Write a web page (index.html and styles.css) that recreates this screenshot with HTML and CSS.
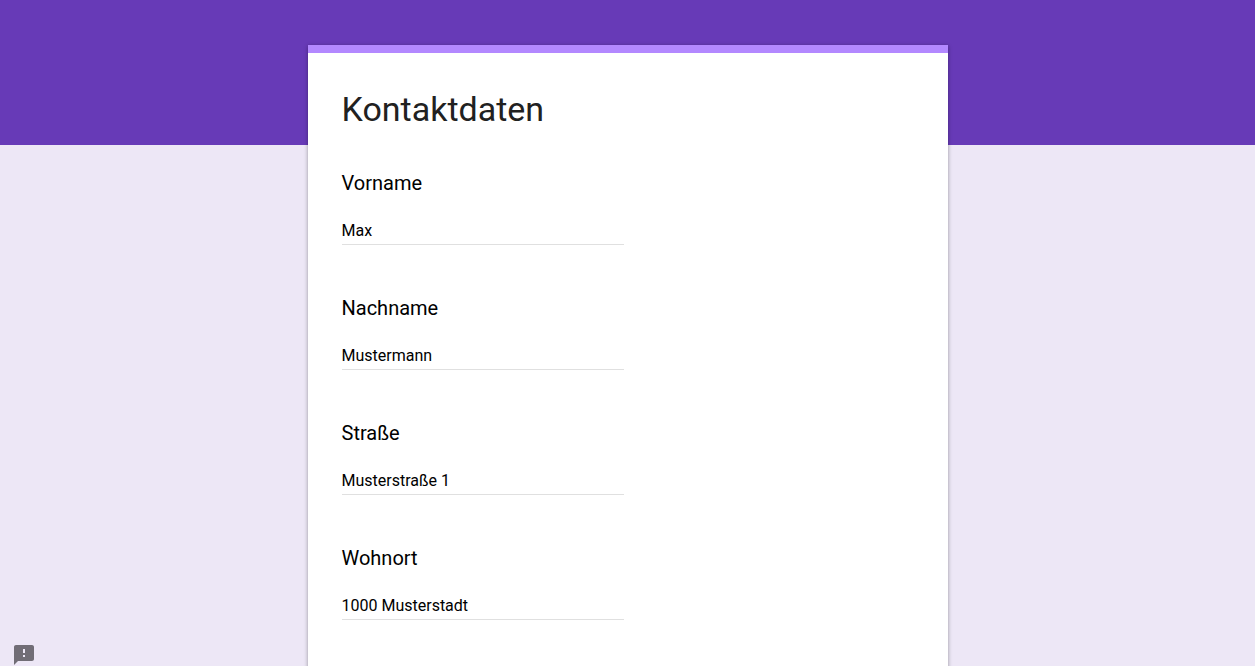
FILE: index.html
```html
<!DOCTYPE html>
<html lang="de">
<head>
<meta charset="utf-8">
<title>Kontaktdaten</title>
<link rel="stylesheet" href="styles.css">
</head>
<body>
<main class="page">
  <form class="card">
    <h1 class="title">Kontaktdaten</h1>
    <div class="question">
      <label class="label" for="vorname">Vorname</label>
      <input class="field" id="vorname" type="text" value="Max">
    </div>
    <div class="question">
      <label class="label" for="nachname">Nachname</label>
      <input class="field" id="nachname" type="text" value="Mustermann">
    </div>
    <div class="question">
      <label class="label" for="strasse">Straße</label>
      <input class="field" id="strasse" type="text" value="Musterstraße 1">
    </div>
    <div class="question">
      <label class="label" for="wohnort">Wohnort</label>
      <input class="field" id="wohnort" type="text" value="1000 Musterstadt">
    </div>
  </form>
</main>
<button class="feedback" type="button" aria-label="Problem melden">
  <svg viewBox="0 0 20 20" width="20" height="20" aria-hidden="true"><path fill="currentColor" fill-rule="evenodd" d="M18 0H2C.9 0 0 .9 0 2v18l4-4h14c1.100 0 2-.9 2-2V2c0-1.100-.9-2-2-2zM11 12H9v-2h2v2zm0-4H9V4h2v4z"/></svg>
</button>
</body>
</html>
```
FILE: styles.css
```css
* {
  box-sizing: border-box;
}

body {
  margin: 0;
  min-height: 100vh;
  background: linear-gradient(#673ab7, #673ab7) top / 100% 145px no-repeat #ede7f6;
  font-family: Roboto, "Liberation Sans", sans-serif;
  color: #000;
}

.page {
  display: flex;
  justify-content: center;
  min-height: 100vh;
  padding-top: 45px;
}

.card {
  width: 100%;
  max-width: 640px;
  padding: 32px 34px 0;
  border-top: 8px solid #b388ff;
  background: #fff;
  box-shadow: 0 1px 4px rgba(0, 0, 0, 0.37);
}

.title {
  margin: 0 0 38px;
  font-size: 34px;
  font-weight: 400;
  line-height: 48px;
  color: #212121;
}

.question {
  display: flex;
  flex-direction: column;
  align-items: flex-start;
  gap: 23px;
  margin-bottom: 51px;
}

.label {
  font-size: 20px;
  line-height: 24px;
}

.field {
  width: 282px;
  max-width: 100%;
  height: 27px;
  padding: 0 0 2px;
  border: 0;
  border-bottom: 1px solid #e0e0e0;
  background: transparent;
  font-family: inherit;
  font-size: 16px;
  color: #000;
  outline: none;
}

.feedback {
  position: fixed;
  bottom: 1px;
  left: 14px;
  padding: 0;
  border: 0;
  background: none;
  color: #716d76;
  line-height: 0;
}
```
